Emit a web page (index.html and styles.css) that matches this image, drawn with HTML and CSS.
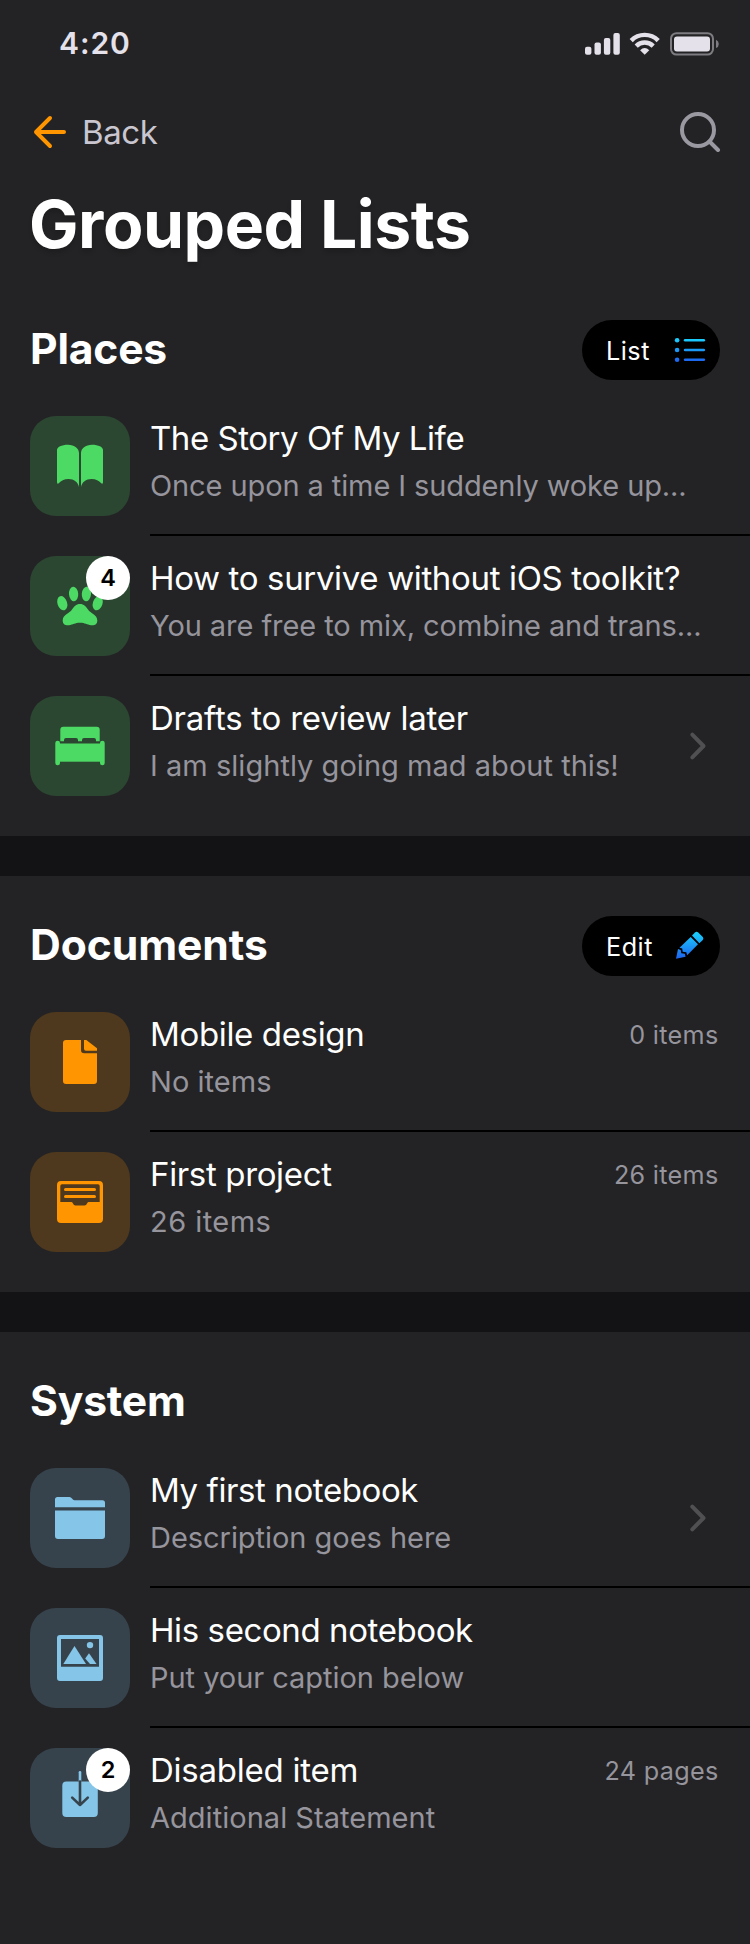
FILE: index.html
```html
<!DOCTYPE html>
<html lang="en">
<head>
<meta charset="utf-8">
<title>Grouped Lists</title>
<link rel="stylesheet" href="styles.css">
</head>
<body>
<header class="top">
  <div class="status">
    <span class="time">4:20</span>
    <svg class="indicators" width="135" height="24" viewBox="585 32 135 24" fill="#e5e1ea">
      <rect x="585" y="46.7" width="6.4" height="8" rx="2"/>
      <rect x="594.5" y="42.6" width="6.4" height="12.1" rx="2"/>
      <rect x="603.9" y="38" width="6.4" height="16.7" rx="2"/>
      <rect x="613.4" y="33" width="6.4" height="21.7" rx="2"/>
      <g fill="none" stroke="#e5e1ea" stroke-width="4.4">
        <path d="M631.2 40.6A18.8 18.8 0 0 1 658.2 40.6"/>
        <path d="M636.2 46.1A12 12 0 0 1 653.2 46.1"/>
      </g>
      <path d="M640.1 50.2Q644.7 45.6 649.3 50.2L644.7 54.8Z"/>
      <rect x="671" y="33.2" width="42" height="21.4" rx="5.5" fill="none" stroke="#7e7c81" stroke-width="2"/>
      <rect x="674" y="36.6" width="36" height="15" rx="3"/>
      <path d="M716 39.8Q718.8 41 718.8 44T716 48.1Z" fill="#7e7c81"/>
    </svg>
  </div>
  <nav class="nav">
    <a class="back">
      <svg width="34" height="40" viewBox="33 112 34 40" fill="none" stroke="#ff9500" stroke-width="4" stroke-linecap="round" stroke-linejoin="round"><path d="M50 118L36 132L50 146M36 132H64"/></svg>
      <span>Back</span>
    </a>
    <svg width="42" height="40" viewBox="679 112 42 40" fill="none" stroke="#9a98a0" stroke-width="4" stroke-linecap="round"><circle cx="698" cy="130" r="16"/><path d="M709.5 141.5L718 150"/></svg>
  </nav>
  <h1>Grouped Lists</h1>
</header>

<main>
  <section class="group">
    <div class="group-head">
      <h2 class="tight">Places</h2>
      <button class="pill"><span>List</span>
        <svg width="34" height="34" viewBox="0 0 34 34">
          <defs><linearGradient id="blue-list" gradientUnits="userSpaceOnUse" x1="0" y1="5" x2="0" y2="29"><stop offset="0" stop-color="#1ad2fd"/><stop offset="1" stop-color="#1d62f0"/></linearGradient></defs>
          <g fill="url(#blue-list)">
            <circle cx="4.1" cy="7.2" r="2.3"/><circle cx="4.1" cy="17" r="2.3"/><circle cx="4.1" cy="26.7" r="2.3"/>
            <rect x="10.8" y="6" width="21.3" height="2.6" rx="1.3"/><rect x="10.8" y="15.7" width="21.3" height="2.6" rx="1.3"/><rect x="10.8" y="25.4" width="21.3" height="2.6" rx="1.3"/>
          </g>
        </svg>
      </button>
    </div>
    <ul class="list">
      <li class="item">
        <div class="tile green"><svg viewBox="0 0 100 100"><path d="M27 34C27 31 31.5 28.7 38 28.7S49 32.5 49 37V71C48 66 44 63 38.5 63C34 63 31 64.800 28.800 67.200Q27 68.500 27 66Z"/><path d="M73 34C73 31 68.500 28.700 62 28.700S51 32.500 51 37V71C52 66 56 63 61.500 63C66 63 69 64.800 71.200 67.200Q73 68.500 73 66Z"/></svg></div>
        <div class="body"><div class="text"><h3 class="tight">The Story Of My Life</h3><p class="tight">Once upon a time I suddenly woke up...</p></div></div>
      </li>
      <li class="item">
        <div class="tile green"><svg viewBox="0 0 100 100"><ellipse cx="32.3" cy="47.2" rx="4.8" ry="7.3" transform="rotate(-18 32.3 47.2)"/><ellipse cx="43.6" cy="38" rx="4.6" ry="7.3" transform="rotate(-5 43.6 38)"/><ellipse cx="56.4" cy="38" rx="4.600" ry="7.300" transform="rotate(5 56.4 38)"/><ellipse cx="67.7" cy="47.2" rx="4.800" ry="7.300" transform="rotate(18 67.7 47.2)"/><path d="M50 48C54 48 56 50.500 58 53.500C60.500 57.500 67.300 58.500 67.300 64.500C67.300 68.500 64.500 69.600 61 69.200C57 68.800 55 66.800 50 66.800S43 68.800 39 69.200C35.500 69.600 32.700 68.500 32.700 64.500C32.700 58.500 39.500 57.500 42 53.500C44 50.500 46 48 50 48Z"/></svg><span class="badge">4</span></div>
        <div class="body"><div class="text"><h3>How to survive without iOS toolkit?</h3><p class="snug">You are free to mix, combine and trans...</p></div></div>
      </li>
      <li class="item">
        <div class="tile green"><svg viewBox="0 0 100 100"><path d="M33.300 30.700H66.700Q69.700 30.700 69.700 33.700V45.300H66V44Q66 42 64 42H54Q52 42 52 44V45.300H48V44Q48 42 46 42H36Q34 42 34 44V45.300H30.300V33.700Q30.300 30.700 33.300 30.700Z"/><rect x="25.300" y="44.700" width="4.700" height="24.600" rx="2.300"/><rect x="70" y="44.700" width="4.700" height="24.600" rx="2.300"/><rect x="27" y="47.500" width="46" height="18.200"/></svg></div>
        <div class="body"><div class="text"><h3 class="loose">Drafts to review later</h3><p class="loose">I am slightly going mad about this!</p></div>
          <svg class="chevron" viewBox="0 0 20 32"><path d="M4.300 4.700L15.500 16L4.300 27.300"/></svg></div>
      </li>
    </ul>
  </section>

  <section class="group">
    <div class="group-head">
      <h2>Documents</h2>
      <button class="pill"><span>Edit</span>
        <svg width="34" height="34" viewBox="0 0 34 34">
          <defs><linearGradient id="blue-edit" gradientUnits="userSpaceOnUse" x1="0" y1="3" x2="0" y2="30"><stop offset="0" stop-color="#1ad2fd"/><stop offset="1" stop-color="#1d62f0"/></linearGradient></defs>
          <g fill="url(#blue-edit)">
            <path d="M19 6.600L22 3.500Q23.500 2 25.200 3.500L29.800 8Q31 9.500 29.800 11L26.400 14.300Z"/>
            <path d="M17.700 8L25 15.200L14.200 26.200L13.300 23.200L9.700 22.800L9.200 19.600L6.500 18.800Z"/>
            <path d="M3 29.800L5 20L7.700 21L8.300 24.300L11.800 24.800L12.600 27.700Z"/>
          </g>
        </svg>
      </button>
    </div>
    <ul class="list">
      <li class="item">
        <div class="tile orange"><svg viewBox="0 0 100 100"><path d="M36 28H51V38Q51 41.300 54.300 41.300H67V69Q67 72 64 72H36Q33 72 33 69V31Q33 28 36 28Z"/><path d="M54 28H56.300L67 36.300V38.700H56Q54 38.700 54 36.700Z"/></svg></div>
        <div class="body"><div class="text"><h3>Mobile design</h3><p class="loose">No items</p></div><span class="count">0 items</span></div>
      </li>
      <li class="item">
        <div class="tile orange"><svg viewBox="0 0 100 100"><path fill-rule="evenodd" d="M31 29H69Q73 29 73 33V67Q73 71 69 71H31Q27 71 27 67V33Q27 29 31 29ZM32 32.300Q30.300 32.300 30.300 34V50H41.500Q42.500 50 43 51.500Q43.700 53.500 45.500 53.500H54.500Q56.300 53.500 57 51.500Q57.500 50 58.500 50H69.700V34Q69.700 32.300 68 32.300Z"/><rect x="34" y="36" width="32" height="3" rx="1.500"/><rect x="34" y="42.900" width="32" height="3" rx="1.500"/></svg></div>
        <div class="body"><div class="text"><h3>First project</h3><p class="looser">26 items</p></div><span class="count">26 items</span></div>
      </li>
    </ul>
  </section>

  <section class="group">
    <div class="group-head"><h2 class="tight">System</h2></div>
    <ul class="list">
      <li class="item">
        <div class="tile blue"><svg viewBox="0 0 100 100"><path d="M27.500 29H39.500Q41 29 42 30.500Q43 32.300 44.500 32.300H72.500Q75 32.300 75 34.800V39.300H25V31.500Q25 29 27.500 29Z"/><path d="M25 42.500H75V68Q75 71 72 71H28Q25 71 25 68Z"/></svg></div>
        <div class="body"><div class="text"><h3 class="snug">My first notebook</h3><p>Description goes here</p></div>
          <svg class="chevron" viewBox="0 0 20 32"><path d="M4.300 4.700L15.500 16L4.300 27.300"/></svg></div>
      </li>
      <li class="item">
        <div class="tile blue"><svg viewBox="0 0 100 100"><path fill-rule="evenodd" d="M30 27H70Q73 27 73 30V70Q73 73 70 73H30Q27 73 27 70V30Q27 27 30 27ZM31 31V58.800H69V31Z"/><path d="M44.500 38L56 56H33.300Z"/><path d="M55.200 50.500L59 45.300L66.500 56H60Z"/><circle cx="60" cy="37.100" r="3.200"/></svg></div>
        <div class="body"><div class="text"><h3 class="snug">His second notebook</h3><p>Put your caption below</p></div></div>
      </li>
      <li class="item">
        <div class="tile blue"><svg viewBox="0 0 100 100"><rect x="32.300" y="33.500" width="35.500" height="35.500" rx="4"/><rect x="48.700" y="23" width="2.600" height="11" rx="1.300"/><path class="cut" d="M50 33.500V57M42.200 49.600L50 57L57.800 49.600"/></svg><span class="badge">2</span></div>
        <div class="body"><div class="text"><h3 class="loose">Disabled item</h3><p class="loose">Additional Statement</p></div><span class="count">24 pages</span></div>
      </li>
    </ul>
  </section>
</main>
</body>
</html>
```

FILE: styles.css
```css
* { box-sizing: border-box; margin: 0; padding: 0; }

body {
  width: 750px;
  min-height: 1944px;
  background: #232325;
  color: #fff;
  font-family: Inter, "Liberation Sans", sans-serif;
}

svg { display: block; flex: none; }

/* Header */
.top { height: 280px; }
.status {
  display: flex;
  justify-content: space-between;
  height: 112px;
  padding: 28px 30px 0 59px;
}
.time {
  font-size: 30px;
  font-weight: 600;
  line-height: 30px;
  letter-spacing: 0.92px;
  color: #e5e1ea;
}
.indicators { margin-top: 4px; }
.nav {
  display: flex;
  justify-content: space-between;
  height: 40px;
  padding: 0 29px 0 33px;
}
.back { display: flex; gap: 15px; }
.back span {
  font-size: 33px;
  line-height: 40px;
  letter-spacing: -0.4px;
  color: #c9c6d0;
}
h1 {
  margin: 32px 0 0 29px;
  font-size: 66px;
  font-weight: 700;
  line-height: 80px;
  letter-spacing: -0.45px;
  text-shadow: 0 4px 4px rgba(0, 0, 0, 0.15);
}

/* Groups */
.group { padding: 40px 0 20px 30px; }
.group + .group { border-top: 40px solid #131315; }
.group-head {
  display: flex;
  justify-content: space-between;
  align-items: flex-start;
  height: 60px;
  margin-bottom: 16px;
  padding-right: 30px;
}
h2 {
  font-size: 42.6px;
  font-weight: 700;
  line-height: 57px;
  letter-spacing: -0.06px;
}
h2.tight { letter-spacing: -0.2px; }
.pill {
  display: flex;
  justify-content: space-between;
  align-items: center;
  width: 138px;
  height: 60px;
  padding: 0 13px 0 24px;
  border: 0;
  border-radius: 30px;
  background: #000;
  color: #fff;
  font: 400 25.2px/60px Inter, "Liberation Sans", sans-serif;
  letter-spacing: 0.5px;
}
.pill span { padding-top: 1px; }

/* Rows */
.list { list-style: none; }
.item { display: flex; gap: 20px; height: 140px; }
.tile {
  position: relative;
  flex: none;
  width: 100px;
  height: 100px;
  margin-top: 20px;
  border-radius: 26px;
}
.tile svg { width: 100px; height: 100px; }
.green { background: #2c4731; fill: #4cd964; }
.orange { background: #4f391e; fill: #ff9500; }
.blue { background: #37434c; fill: #84c5e8; }
.cut {
  fill: none;
  stroke: #37434c;
  stroke-width: 2.6;
  stroke-linecap: round;
  stroke-linejoin: round;
}
.badge {
  position: absolute;
  top: 0;
  right: 0;
  width: 44px;
  height: 44px;
  border-radius: 50%;
  background: #fff;
  color: #000;
  font-size: 23.5px;
  font-weight: 600;
  line-height: 43px;
  text-align: center;
}
.body {
  flex: 1;
  display: flex;
  justify-content: space-between;
  min-width: 0;
  padding-top: 20px;
  border-bottom: 2px solid #000;
}
.item:last-child .body { border-bottom-color: transparent; }
.text { padding-top: 2px; white-space: nowrap; }
h3 {
  font-size: 33px;
  font-weight: 400;
  line-height: 40px;
  letter-spacing: -0.35px;
}
h3.tight { letter-spacing: -0.45px; }
h3.snug { letter-spacing: -0.4px; }
h3.loose { letter-spacing: -0.24px; }
.text p {
  margin-top: 10px;
  font-size: 29px;
  line-height: 36px;
  letter-spacing: -0.04px;
  color: #96949c;
}
.text p.tight { letter-spacing: -0.1px; }
.text p.snug { letter-spacing: -0.07px; }
.text p.loose { letter-spacing: 0.03px; }
.text p.looser { letter-spacing: 0.45px; }
.count {
  padding-right: 31.5px;
  font-size: 25.2px;
  line-height: 46px;
  letter-spacing: 0.3px;
  color: #96949c;
}
.chevron {
  width: 20px;
  height: 32px;
  margin: 34px 42px 0 0;
  fill: none;
  stroke: #505053;
  stroke-width: 4;
  stroke-linecap: round;
  stroke-linejoin: round;
}
```
